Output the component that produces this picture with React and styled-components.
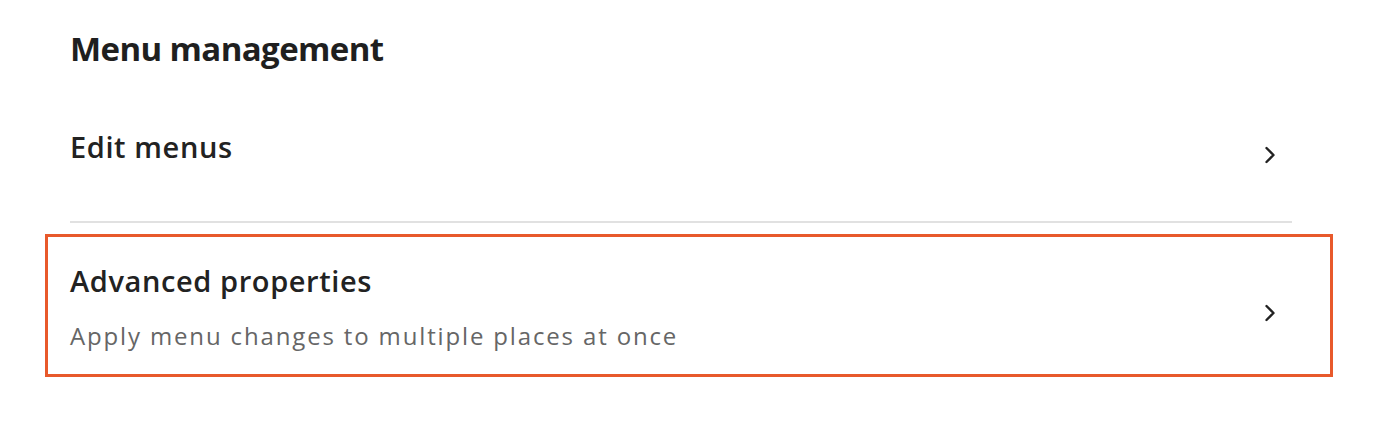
import styled, { createGlobalStyle, css } from 'styled-components'

const GlobalStyle = createGlobalStyle`
  body {
    margin: 0;
    background: #fff;
    font-family: "Open Sans", Lato, sans-serif;
    color: #222;
  }
`

const Page = styled.div`
  width: 1222px;
  padding: 29px 0 40px 70px;
`

const Heading = styled.h2`
  margin: 0;
  font-size: 33px;
  line-height: 40px;
  font-weight: 700;
  letter-spacing: -0.6px;
  color: #1f1f1f;
`

const List = styled.div`
  display: flex;
  flex-direction: column;
  margin-top: 31px;
`

const highlight = css`
  &::after {
    content: '';
    position: absolute;
    top: 11px;
    bottom: 0;
    left: -25px;
    right: -41px;
    border: 3px solid #e8592b;
    pointer-events: none;
  }
`

const Row = styled.div`
  position: relative;
  display: flex;
  align-items: center;
  justify-content: space-between;
  padding: ${({ $sub }) => ($sub ? '41px 0 26px' : '30px 0 57px')};
  cursor: pointer;
  ${({ $highlighted }) => $highlighted && highlight}
`

const RowText = styled.div`
  display: flex;
  flex-direction: column;
  gap: 23px;
`

const RowTitle = styled.div`
  font-size: 29px;
  line-height: 34px;
  font-weight: 600;
  letter-spacing: 0.6px;
  color: #222;
`

const RowSubtitle = styled.div`
  font-size: 24px;
  line-height: 30px;
  color: #666;
  letter-spacing: 1.85px;
`

const ChevronBox = styled.div`
  width: 24px;
  height: 24px;
  margin-right: 10px;
  display: flex;
  align-items: center;
  justify-content: center;
  flex-shrink: 0;
  transform: translateY(${({ $shift }) => $shift || 0}px);
`

const Divider = styled.div`
  height: 2px;
  background: #e1e1e1;
`

const Chevron = ({ shift }) => (
  <ChevronBox $shift={shift}>
    <svg width="12" height="18" viewBox="0 0 12 18" fill="none">
      <polyline
        points="2.5,2 9.5,9 2.5,16"
        stroke="#222"
        strokeWidth="2.4"
        strokeLinecap="round"
        strokeLinejoin="round"
      />
    </svg>
  </ChevronBox>
)

const App = () => (
  <>
    <GlobalStyle />
    <Page>
      <Heading>Menu management</Heading>
      <List>
        <Row>
          <RowText>
            <RowTitle>Edit menus</RowTitle>
          </RowText>
          <Chevron shift={8} />
        </Row>
        <Divider />
        <Row $sub $highlighted>
          <RowText>
            <RowTitle>Advanced properties</RowTitle>
            <RowSubtitle>Apply menu changes to multiple places at once</RowSubtitle>
          </RowText>
          <Chevron shift={5} />
        </Row>
      </List>
    </Page>
  </>
)

export default App
